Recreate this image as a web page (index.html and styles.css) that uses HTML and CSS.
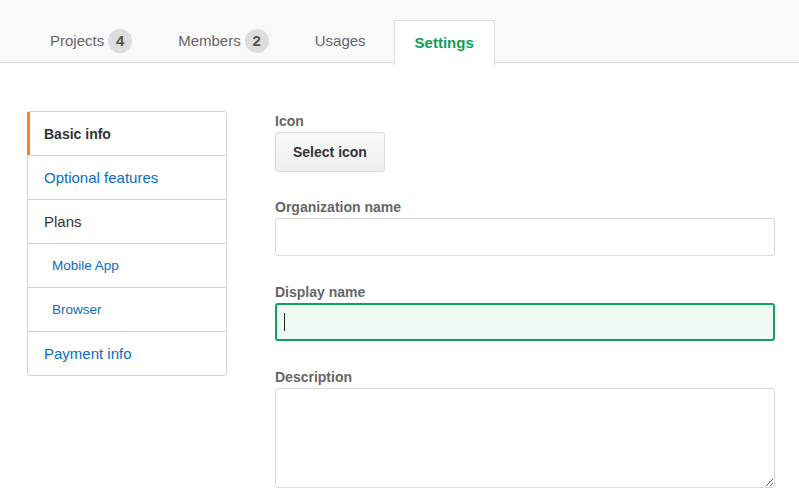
FILE: index.html
```html
<!DOCTYPE html>
<html lang="en">
<head>
    <meta charset="UTF-8">
    <meta name="viewport" content="width=device-width, initial-scale=1.0">
    <title>Organization settings</title>
    <link rel="stylesheet" href="styles.css">
</head>
<body>
    <div class="tabs-bar">
        <ul class="tabs">
            <li class="tab">Projects <span class="badge">4</span></li>
            <li class="tab">Members <span class="badge">2</span></li>
            <li class="tab">Usages</li>
            <li class="tab active">Settings</li>
        </ul>
    </div>

    <div class="page">
        <ul class="side-nav">
            <li class="nav-item current">Basic info</li>
            <li class="nav-item link">Optional features</li>
            <li class="nav-item">Plans</li>
            <li class="nav-item link sub">Mobile App</li>
            <li class="nav-item link sub">Browser</li>
            <li class="nav-item link">Payment info</li>
        </ul>

        <form class="settings-form">
            <div class="field">
                <label>Icon</label>
                <button type="button" class="btn">Select icon</button>
            </div>
            <div class="field">
                <label for="orgName">Organization name</label>
                <input type="text" id="orgName">
            </div>
            <div class="field">
                <label for="displayName">Display name</label>
                <div class="input-wrap">
                    <input type="text" id="displayName" class="focused">
                    <span class="caret"></span>
                </div>
            </div>
            <div class="field">
                <label for="description">Description</label>
                <textarea id="description"></textarea>
            </div>
        </form>
    </div>
</body>
</html>
```

FILE: styles.css
```css
body {
    font-family: "Liberation Sans", Arial, sans-serif;
    margin: 0;
    background: white;
    color: #333;
}
.tabs-bar {
    background-color: #f9f9f9;
    border-bottom: 1px solid #ddd;
    height: 62px;
}
.tabs {
    list-style: none;
    margin: 0;
    padding: 20px 0 0 26px;
    display: flex;
    height: 42px;
}
.tab {
    display: flex;
    align-items: center;
    padding: 0 22px 2px;
    font-size: 15px;
    color: #666;
    border: 1px solid transparent;
    border-bottom: none;
    border-radius: 3px 3px 0 0;
}
.tab:first-child {
    padding-left: 23px;
}
.tab.active {
    background: white;
    border-color: #ddd;
    color: #0f9d58;
    font-weight: bold;
    height: 43px;
    padding: 0 20px 2px;
    margin-left: 5px;
}
.badge {
    display: inline-flex;
    align-items: center;
    justify-content: center;
    width: 24px;
    height: 24px;
    margin-left: 4px;
    border-radius: 50%;
    background-color: #ddd;
    color: #555;
    font-weight: bold;
    font-size: 15px;
}
.page {
    display: flex;
    gap: 48px;
    padding: 48px 0 0 27px;
}
.side-nav {
    list-style: none;
    margin: 0;
    padding: 0;
    width: 198px;
    border: 1px solid #d3d3d3;
    border-radius: 3px;
    align-self: flex-start;
}
.nav-item {
    height: 43px;
    line-height: 43px;
    padding-left: 16px;
    font-size: 15px;
    border-top: 1px solid #d3d3d3;
}
.nav-item:first-child {
    border-top: none;
    line-height: 45px;
}
.nav-item.current {
    font-weight: bold;
    font-size: 14px;
    padding-left: 14px;
    border-left: 3px solid #f5822a;
    margin-left: -1px;
}
.nav-item.link {
    color: #0a6ebd;
}
.nav-item.sub {
    font-size: 13.5px;
    padding-left: 24px;
}
.settings-form {
    width: 500px;
    padding-top: 1px;
}
.field {
    margin-bottom: 27px;
}
.field:first-child {
    margin-bottom: 26px;
}
.field label {
    display: block;
    font-size: 14px;
    font-weight: bold;
    color: #666;
    line-height: 18px;
    margin-bottom: 2px;
}
.btn {
    font-family: inherit;
    font-size: 14px;
    font-weight: bold;
    color: #333;
    height: 40px;
    padding: 0 17px;
    border: 1px solid #d8d8d8;
    border-radius: 3px;
    background: linear-gradient(#f9f9f9, #efefef);
}
input, textarea {
    display: block;
    box-sizing: border-box;
    width: 500px;
    height: 38px;
    margin: 0;
    border: 1px solid #d8d8d8;
    border-radius: 3px;
    font-family: inherit;
    font-size: 14px;
    padding: 0 8px;
    background: white;
    outline: none;
}
input.focused {
    border: 2px solid #13a05b;
    background-color: #eefaf4;
}
.input-wrap {
    position: relative;
}
.caret {
    position: absolute;
    left: 9px;
    top: 10px;
    width: 1px;
    height: 18px;
    background: #222;
}
textarea {
    height: 100px;
    padding: 8px;
    resize: vertical;
}
```
